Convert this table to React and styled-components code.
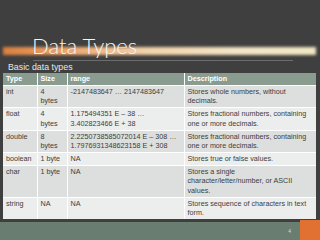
import React from "react";
import styled, { createGlobalStyle } from "styled-components";

const Global = createGlobalStyle`
  html, body { margin: 0; padding: 0; background: #3f3f3f; }
  * { box-sizing: border-box; }
`;

const Slide = styled.div`
  width: 320px;
  height: 240px;
  background: #3f3f3f;
  display: flex;
  flex-direction: column;
  overflow: hidden;
  font-family: "Liberation Sans", Arial, sans-serif;
`;

const TitleArea = styled.div`
  position: relative;
  height: 60px;
  padding: 34px 0 0 32px;
  &::before {
    content: "";
    position: absolute;
    left: 3px;
    right: 4px;
    top: 47px;
    height: 8px;
    background: linear-gradient(90deg, #d9803f 0%, #eea56c 20%, #f2d2aa 45%, #f3e6c6 75%, #efe7c4 100%);
    filter: blur(1.5px);
  }
`;

const Title = styled.h1`
  position: relative;
  margin: 0;
  font-family: "Lato", "Liberation Sans", sans-serif;
  font-weight: 300;
  font-size: 22px;
  line-height: 24px;
  color: #f4f4f4;
`;

const Rule = styled.div`
  margin-left: 33px;
  width: 260px;
  height: 1px;
  background: #6c6c6c;
`;

const Subtitle = styled.div`
  padding: 1px 0 0 8px;
  height: 12px;
  font-size: 8.8px;
  line-height: 11px;
  color: #e8e8e8;
`;

const Table = styled.table`
  margin: 0 4px 0 3px;
  width: 313px;
  border-collapse: collapse;
  table-layout: fixed;
  font-size: 7.2px;
  line-height: 9.7px;
`;

const Th = styled.th`
  background: #8a9c90;
  color: #ffffff;
  font-weight: bold;
  text-align: left;
  padding: 1px 3px;
  border-left: 1px solid #ffffff;
  &:first-child { border-left: none; }
`;

const Tr = styled.tr`
  background: ${(p) => (p.$alt ? "#eceeed" : "#dcdfdd")};
  border-top: 1px solid #ffffff;
`;

const Td = styled.td`
  color: #3c3c3c;
  padding: 1px 3px;
  vertical-align: top;
  border-left: 1px solid #ffffff;
  &:first-child { border-left: none; }
`;

const Footer = styled.div`
  margin-top: auto;
  height: 18px;
  background: #6a7d71;
  display: flex;
  justify-content: flex-end;
  align-items: flex-end;
`;

const PageNum = styled.span`
  font-size: 5px;
  line-height: 5px;
  color: #d8dcd8;
  margin: 0 9px 6px 0;
`;

const Accent = styled.div`
  width: 20px;
  height: 20px;
  margin-top: -2px;
  align-self: flex-start;
  background: #e07132;
`;

const rows = [
  ["int", <>4<br />bytes</>, "-2147483647 … 2147483647", "Stores whole numbers, without decimals."],
  ["float", <>4<br />bytes</>, <>1.175494351 E – 38 …<br />3.402823466 E + 38</>, "Stores fractional numbers, containing one or more decimals."],
  ["double", <>8<br />bytes</>, <>2.2250738585072014 E – 308 …<br />1.7976931348623158 E + 308</>, "Stores fractional numbers, containing one or more decimals."],
  ["boolean", "1 byte", "NA", "Stores true or false values."],
  ["char", "1 byte", "NA", <>Stores a single<br />character/letter/number, or ASCII values.</>],
  ["string", "NA", "NA", "Stores sequence of characters in text form."],
];

export default function App() {
  return (
    <>
      <Global />
      <Slide>
        <TitleArea>
          <Title>Data Types</Title>
        </TitleArea>
        <Rule />
        <Subtitle>Basic data types</Subtitle>
        <Table>
          <colgroup>
            <col style={{ width: 34 }} />
            <col style={{ width: 30 }} />
            <col style={{ width: 117 }} />
            <col style={{ width: 132 }} />
          </colgroup>
          <thead>
            <tr>
              <Th>Type</Th>
              <Th>Size</Th>
              <Th>range</Th>
              <Th>Description</Th>
            </tr>
          </thead>
          <tbody>
            {rows.map((r, i) => (
              <Tr key={i} $alt={i % 2 === 1}>
                {r.map((c, j) => (
                  <Td key={j}>{c}</Td>
                ))}
              </Tr>
            ))}
          </tbody>
        </Table>
        <Footer>
          <PageNum>4</PageNum>
          <Accent />
        </Footer>
      </Slide>
    </>
  );
}
